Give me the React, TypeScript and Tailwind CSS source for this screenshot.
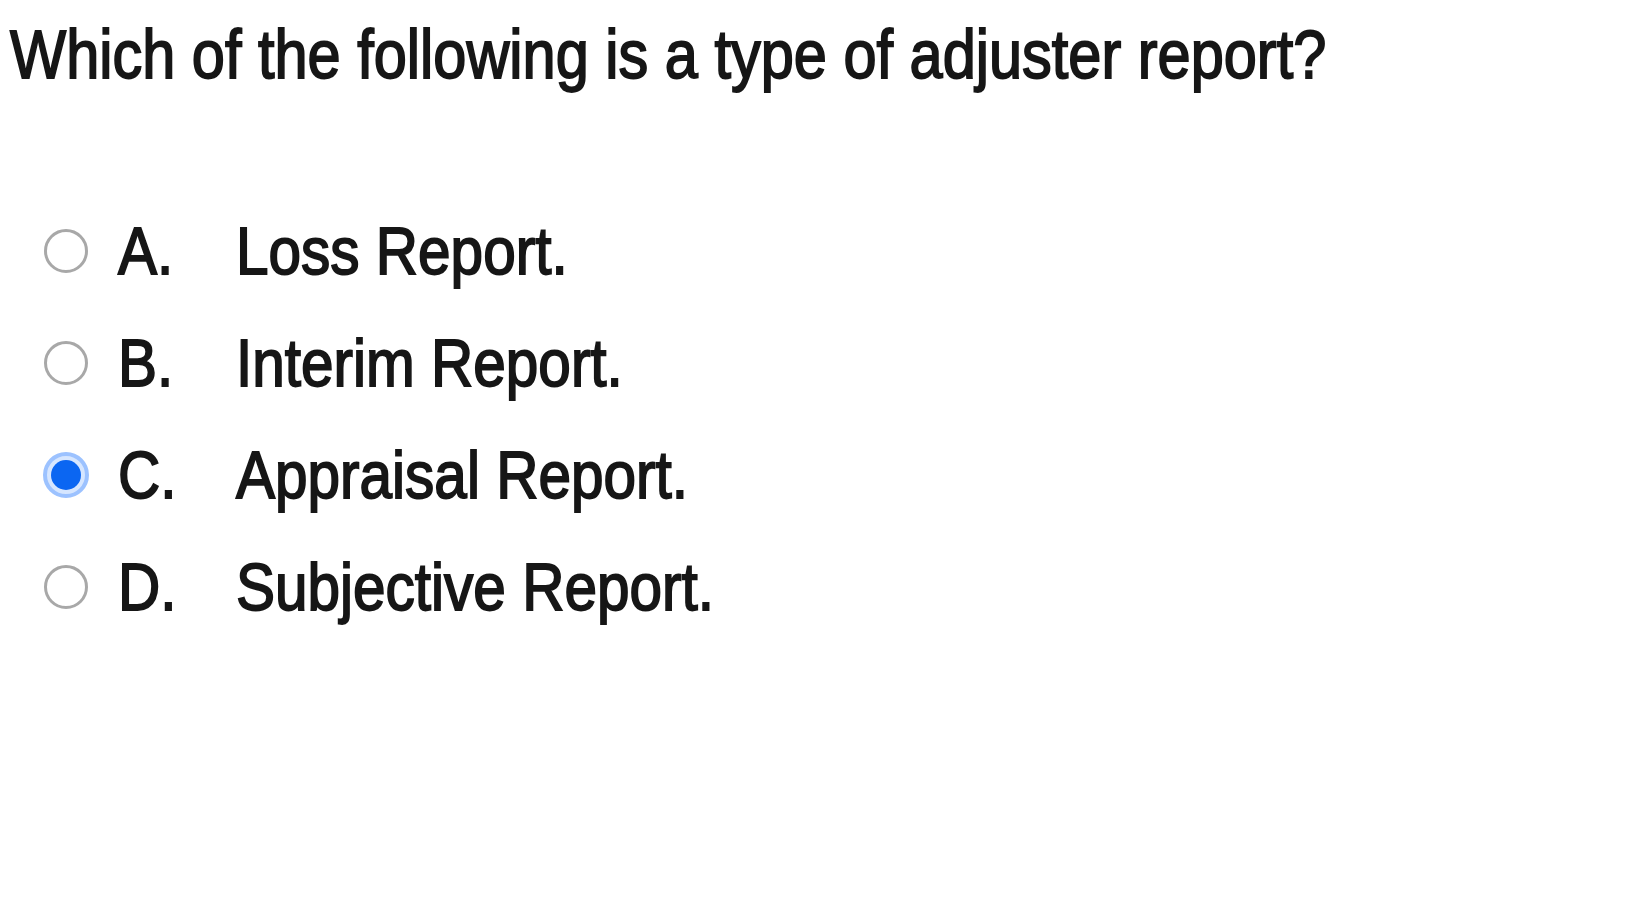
const options = [
  { letter: "A.", text: "Loss Report.", checked: false },
  { letter: "B.", text: "Interim Report.", checked: false },
  { letter: "C.", text: "Appraisal Report.", checked: true },
  { letter: "D.", text: "Subjective Report.", checked: false },
];

const Radio = ({ checked }: { checked: boolean }) =>
  checked ? (
    <div className="flex h-[46px] w-[46px] items-center justify-center rounded-full border-[4px] border-[#9cc2ff] bg-[#d6e6ff]">
      <div className="h-[30px] w-[30px] rounded-full bg-[#0b66f2]" />
    </div>
  ) : (
    <div className="h-[44px] w-[44px] rounded-full border-[3px] border-[#a8a8a8] bg-white" />
  );

export default function App() {
  return (
    <div className="min-h-screen w-full bg-white pl-[10px] pt-[21px] text-[#161616] font-['Liberation_Sans',Arial,sans-serif] [-webkit-text-stroke:1.6px_#161616]">
      <h1 className="inline-block origin-center scale-y-[1.15] whitespace-nowrap text-[59.5px] leading-[68px]">
        Which of the following is a type of adjuster report?
      </h1>

      <div className="mt-[106px] flex flex-col">
        {options.map((opt) => (
          <label key={opt.letter} className="flex h-[112px] items-center">
            <div className="ml-[33px] flex w-[46px] items-center justify-center">
              <Radio checked={opt.checked} />
            </div>
            <span className="ml-[29px] inline-block w-[118px] scale-y-[1.15] text-[58.5px] leading-[68px]">
              {opt.letter}
            </span>
            <span className="inline-block scale-y-[1.15] text-[58.5px] leading-[68px]">{opt.text}</span>
          </label>
        ))}
      </div>
    </div>
  );
}
